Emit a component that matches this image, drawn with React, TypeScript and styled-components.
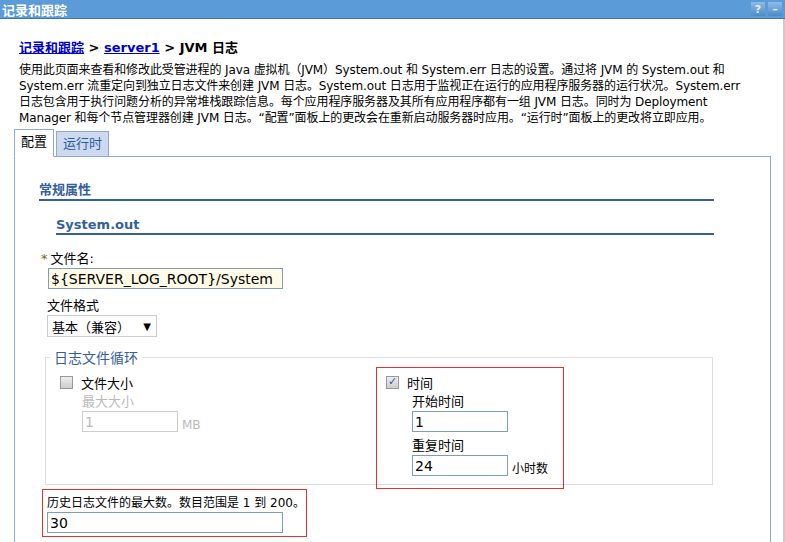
import styled, { createGlobalStyle } from 'styled-components';

const Global = createGlobalStyle`
  body { margin: 0; background: #fff; font-family: Tahoma, "DejaVu Sans", "Noto Sans CJK SC", sans-serif; font-size: 13px; color: #000; }
`;

const TitleBar = styled.div`
  height: 18px;
  background: #5b9bd8;
  color: #fff;
  font-weight: bold;
  font-size: 13px;
  display: flex;
  align-items: center;
  padding-left: 2px;
  border-bottom: 1px solid #3f74b0;
`;

const TitleText = styled.div`
  flex: 1;
`;

const TitleButton = styled.div`
  width: 14px;
  height: 14px;
  margin-right: 3px;
  background: linear-gradient(#8fbbe6, #4f8ac6);
  color: #dfeeff;
  font-size: 11px;
  display: flex;
  align-items: center;
  justify-content: center;
`;

const Page = styled.div`
  padding: 16px 12px 0 14px;
  border-right: 2px solid #ccc;
  height: 523px;
  box-sizing: border-box;
  overflow: hidden;
`;

const Crumbs = styled.div`
  font-weight: bold;
  font-size: 13px;
  margin: 2px 0 6px 5px;
  a { color: #0000cc; text-decoration: underline; }
`;

const Desc = styled.p`
  margin: 0 0 4px 5px;
  line-height: 16px;
  font-size: 12px;
  white-space: nowrap;
  letter-spacing: -0.1px;
`;

const Tabs = styled.div`
  display: flex;
  align-items: flex-end;
  height: 26px;
`;

const Tab = styled.div<{ $active?: boolean }>`
  padding: 0 6px;
  height: ${p => (p.$active ? 26 : 24)}px;
  line-height: 24px;
  border: 1px solid #8fa9d4;
  border-bottom: ${p => (p.$active ? '1px solid #fff' : '1px solid #8fa9d4')};
  background: ${p => (p.$active ? '#fff' : '#cdd9ee')};
  color: ${p => (p.$active ? '#000' : '#2b5aa3')};
  margin-right: 2px;
  position: relative;
  top: 1px;
`;

const Panel = styled.div`
  border: 1px solid #8fa9d4;
  padding: 22px 0 0 24px;
  height: 400px;
`;

const SectionHead = styled.div<{ $indent?: number }>`
  color: #34609c;
  font-weight: bold;
  margin-left: ${p => p.$indent || 0}px;
  width: ${p => 675 - (p.$indent || 0)}px;
  border-bottom: 2px solid #34609c;
  padding-bottom: 1px;
  margin-bottom: 16px;
`;

const Label = styled.div<{ $muted?: boolean }>`
  color: ${p => (p.$muted ? '#bbb' : '#000')};
  margin: 0 0 1px 0;
  line-height: 16px;
`;

const Star = styled.span`
  color: #7a6a20;
  margin-right: 3px;
`;

const Field = styled.div`
  margin-left: 9px;
  margin-bottom: 9px;
`;

const Input = styled.input<{ $w: number; $yellow?: boolean }>`
  width: ${p => p.$w}px;
  height: 21px;
  box-sizing: border-box;
  border: 1px solid #7f9db9;
  background: ${p => (p.$yellow ? '#fffbe6' : '#fff')};
  font-family: "DejaVu Sans", sans-serif;
  font-size: 14px;
  padding: 0 2px;
  vertical-align: bottom;
  &:disabled { border-color: #ccc; color: #bbb; background: #fff; }
`;

const Select = styled.div`
  width: 110px;
  height: 22px;
  box-sizing: border-box;
  border: 1px solid #ccc;
  display: flex;
  align-items: center;
  justify-content: space-between;
  padding: 0 5px 0 4px;
  font-size: 13px;
`;

const Fieldset = styled.fieldset`
  border: 1px solid #ddd;
  margin: 10px 0 0 6px;
  width: 668px;
  height: 138px;
  box-sizing: border-box;
  padding: 0;
  display: flex;
  align-items: flex-start;
`;

const Legend = styled.legend`
  color: #34609c;
  font-size: 14px;
  padding: 0 4px;
  margin-left: 4px;
`;

const Col = styled.div`
  padding: 6px 0 0 14px;
  width: 300px;
`;

const CheckRow = styled.div`
  display: flex;
  align-items: center;
  gap: 8px;
  margin-bottom: 2px;
`;

const Box = styled.span<{ $on?: boolean }>`
  width: 11px;
  height: 11px;
  border: 1px solid #999;
  background: linear-gradient(#eee, #ccc);
  font-size: 11px;
  color: #3a56a0;
  line-height: 10px;
  text-align: center;
`;

const Sub = styled.div`
  margin-left: 22px;
`;

const Red = styled.div<{ $w: number; $h: number }>`
  border: 1px solid #e63030;
  width: ${p => p.$w}px;
  height: ${p => p.$h}px;
  box-sizing: border-box;
`;

const TimeBox = styled(Red)`
  margin: 0 0 0 16px;
  padding: 5px 0 0 9px;
`;

const Unit = styled.span<{ $muted?: boolean }>`
  color: ${p => (p.$muted ? '#bbb' : '#000')};
  margin-left: 4px;
  font-size: 12px;
`;

const HistBox = styled(Red)`
  margin: 4px 0 0 3px;
  padding: 5px 0 0 4px;
`;

export default function App() {
  return (
    <>
      <Global />
      <TitleBar>
        <TitleText>记录和跟踪</TitleText>
        <TitleButton>?</TitleButton>
        <TitleButton>–</TitleButton>
      </TitleBar>
      <Page>
        <Crumbs>
          <a>记录和跟踪</a> &gt; <a>server1</a> &gt; JVM 日志
        </Crumbs>
        <Desc>
          使用此页面来查看和修改此受管进程的 Java 虚拟机（JVM）System.out 和 System.err 日志的设置。通过将 JVM 的 System.out 和<br />
          System.err 流重定向到独立日志文件来创建 JVM 日志。System.out 日志用于监视正在运行的应用程序服务器的运行状况。System.err<br />
          日志包含用于执行问题分析的异常堆栈跟踪信息。每个应用程序服务器及其所有应用程序都有一组 JVM 日志。同时为 Deployment<br />
          Manager 和每个节点管理器创建 JVM 日志。“配置”面板上的更改会在重新启动服务器时应用。“运行时”面板上的更改将立即应用。
        </Desc>
        <Tabs>
          <Tab $active>配置</Tab>
          <Tab>运行时</Tab>
        </Tabs>
        <Panel>
          <SectionHead>常规属性</SectionHead>
          <SectionHead $indent={17}>System.out</SectionHead>
          <Field style={{ marginLeft: 2 }}>
            <Label><Star>*</Star>文件名:</Label>
            <Input $w={235} $yellow defaultValue="${SERVER_LOG_ROOT}/System" style={{ marginLeft: 7 }} />
          </Field>
          <Field style={{ marginLeft: 8 }}>
            <Label>文件格式</Label>
            <Select>基本（兼容）<span style={{ fontSize: 10 }}>▼</span></Select>
          </Field>
          <Fieldset>
            <Legend>日志文件循环</Legend>
            <Col>
              <CheckRow><Box />文件大小</CheckRow>
              <Sub>
                <Label $muted>最大大小</Label>
                <Input $w={96} disabled defaultValue="1" /><Unit $muted>MB</Unit>
              </Sub>
            </Col>
            <TimeBox $w={188} $h={122}>
              <CheckRow><Box>✓</Box>时间</CheckRow>
              <Sub style={{ marginLeft: 26 }}>
                <Label>开始时间</Label>
                <Input $w={96} defaultValue="1" style={{ marginBottom: 6 }} />
                <Label>重复时间</Label>
                <Input $w={96} defaultValue="24" /><Unit>小时数</Unit>
              </Sub>
            </TimeBox>
          </Fieldset>
          <HistBox $w={265} $h={48} style={{ marginLeft: 3 }}>
            <Label style={{ fontSize: 12 }}>历史日志文件的最大数。数目范围是 1 到 200。</Label>
            <Input $w={236} defaultValue="30" />
          </HistBox>
        </Panel>
      </Page>
    </>
  );
}
